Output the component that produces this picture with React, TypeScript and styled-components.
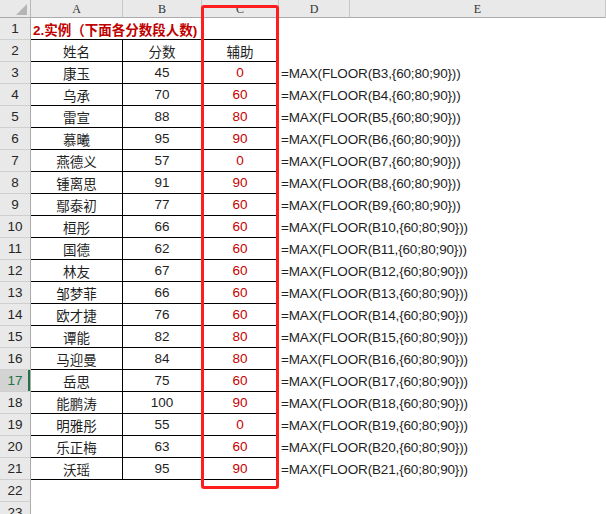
import React from "react";
import styled, { createGlobalStyle, css } from "styled-components";

const Global = createGlobalStyle`
  html, body { margin: 0; padding: 0; background: #fff; overflow: hidden; }
  body { width: 606px; height: 514px; }
`;

const SANS = `"Liberation Sans", "Noto Sans CJK SC", sans-serif`;

const Wrap = styled.div`
  position: relative;
  width: 606px;
  height: 514px;
  overflow: hidden;
  font-family: ${SANS};
`;

const Sheet = styled.div`
  display: grid;
  grid-template-columns: 31px 92px 79px 77px 71px 1fr;
  grid-template-rows: 18px;
  grid-auto-rows: 22px;
`;

const Corner = styled.div`
  position: relative;
  box-sizing: border-box;
  background: #e9e9e9;
  border-right: 1px solid #b8b8b8;
  border-bottom: 1px solid #ababab;
  &::after {
    content: "";
    position: absolute;
    right: 3px;
    bottom: 2px;
    width: 0;
    height: 0;
    border-left: 11px solid transparent;
    border-bottom: 11px solid #b5b5b5;
  }
`;

const ColHeader = styled.div`
  box-sizing: border-box;
  background: #e9e9e9;
  border-right: 1px solid #c8c8c8;
  border-bottom: 1px solid #ababab;
  display: flex;
  align-items: center;
  justify-content: center;
  font-family: "Liberation Serif", serif;
  font-size: 12px;
  color: #333;
  padding-top: 1px;
`;

const RowHeader = styled.div<{ $active?: boolean }>`
  box-sizing: border-box;
  background: ${(p) => (p.$active ? "#d3d3d3" : "#e9e9e9")};
  border-bottom: 1px solid #cfcfcf;
  border-right: 1px solid #ababab;
  display: flex;
  align-items: center;
  justify-content: center;
  font-size: 13.5px;
  color: ${(p) => (p.$active ? "#217346" : "#262626")};
  ${(p) =>
    p.$active &&
    css`
      box-shadow: inset -2px 0 0 #217346;
    `}
`;

const Cell = styled.div<{ $table?: boolean; $span?: number; $tone?: "red" | "plain" }>`
  box-sizing: border-box;
  display: flex;
  align-items: center;
  justify-content: center;
  font-size: 13.5px;
  white-space: nowrap;
  color: ${(p) => (p.$tone === "red" ? "#c80000" : "#1f1f1f")};
  ${(p) => p.$span && css`grid-column: span ${p.$span};`}
  ${(p) =>
    p.$table &&
    css`
      border-right: 1px solid #000;
      border-bottom: 1px solid #000;
    `}
`;

const TitleCell = styled.div`
  grid-column: span 3;
  box-sizing: border-box;
  border-bottom: 1px solid #000;
  display: flex;
  align-items: center;
  padding-left: 2px;
  font-size: 13.5px;
  font-weight: bold;
  color: #c00000;
  white-space: nowrap;
`;

const Blank = styled.div<{ $span?: number }>`
  ${(p) => p.$span && css`grid-column: span ${p.$span};`}
`;

const Formula = styled.div`
  grid-column: span 2;
  display: flex;
  align-items: center;
  padding-left: 2px;
  font-size: 13.5px;
  letter-spacing: -0.15px;
  color: #1f1f1f;
  white-space: nowrap;
`;

const Highlight = styled.div`
  position: absolute;
  left: 201px;
  top: 5px;
  width: 78px;
  height: 484px;
  box-sizing: border-box;
  border: 3px solid #ff1e1e;
  border-radius: 3px;
  pointer-events: none;
`;

const rows: [string, number, number][] = [
  ["康玉", 45, 0],
  ["乌承", 70, 60],
  ["雷宣", 88, 80],
  ["慕曦", 95, 90],
  ["燕德义", 57, 0],
  ["锺离思", 91, 90],
  ["鄢泰初", 77, 60],
  ["桓彤", 66, 60],
  ["国德", 62, 60],
  ["林友", 67, 60],
  ["邹梦菲", 66, 60],
  ["欧才捷", 76, 60],
  ["谭能", 82, 80],
  ["马迎曼", 84, 80],
  ["岳思", 75, 60],
  ["能鹏涛", 100, 90],
  ["明雅彤", 55, 0],
  ["乐正梅", 63, 60],
  ["沃瑶", 95, 90],
];

export default function App() {
  return (
    <Wrap>
      <Global />
      <Sheet>
        <Corner />
        {["A", "B", "C", "D", "E"].map((c) => (
          <ColHeader key={c}>{c}</ColHeader>
        ))}

        <RowHeader>1</RowHeader>
        <TitleCell>2.实例（下面各分数段人数)</TitleCell>
        <Blank $span={2} />

        <RowHeader>2</RowHeader>
        <Cell $table>姓名</Cell>
        <Cell $table>分数</Cell>
        <Cell $table>辅助</Cell>
        <Blank $span={2} />

        {rows.map(([name, score, aux], i) => {
          const r = i + 3;
          return (
            <React.Fragment key={r}>
              <RowHeader $active={r === 17}>{r}</RowHeader>
              <Cell $table>{name}</Cell>
              <Cell $table>{score}</Cell>
              <Cell $table $tone="red">
                {aux}
              </Cell>
              <Formula>{`=MAX(FLOOR(B${r},{60;80;90}))`}</Formula>
            </React.Fragment>
          );
        })}

        {[22, 23].map((r) => (
          <React.Fragment key={r}>
            <RowHeader>{r}</RowHeader>
            <Blank $span={5} />
          </React.Fragment>
        ))}
      </Sheet>
      <Highlight />
    </Wrap>
  );
}
